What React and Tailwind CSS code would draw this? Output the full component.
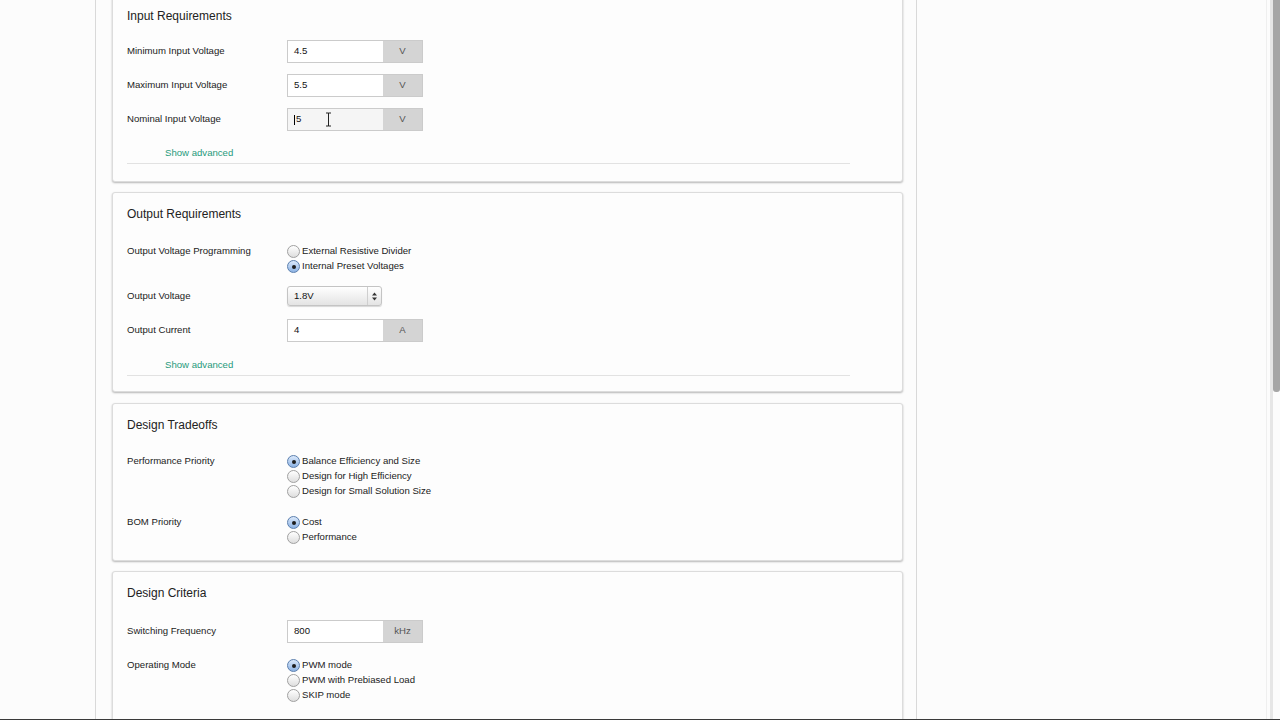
import React from "react";

const font = { fontFamily: '"Liberation Sans", Arial, sans-serif' };

function Radio({ checked, label }) {
  return (
    <div className="flex h-[15px] items-center">
      {checked ? (
        <span className="flex h-[13px] w-[13px] items-center justify-center rounded-full border border-[#5b7fae] bg-linear-to-b from-[#dbe9fb] to-[#8db3e4]">
          <span className="h-[4px] w-[4px] rounded-full bg-[#1d1d1d]" />
        </span>
      ) : (
        <span className="h-[13px] w-[13px] rounded-full border border-[#a0a0a0] bg-linear-to-b from-white to-[#dedede]" />
      )}
      <span className="ml-[2px] text-[9.6px] text-[#222]">{label}</span>
    </div>
  );
}

function Label({ children, h = "h-[22px]" }) {
  return <div className={`w-[160px] shrink-0 flex items-center text-[9.6px] text-[#222] ${h}`}>{children}</div>;
}

function UnitInput({ value, unit, focused }) {
  return (
    <div className="relative flex h-[23px] w-[136px] border border-[#cbcbcb]">
      <div className={`flex w-[95px] items-center pl-[6px] text-[9.6px] text-[#111] ${focused ? "bg-[#f5f5f5]" : "bg-white"}`}>
        {focused && <span className="mr-px h-[10px] w-px bg-black" />}
        {value}
      </div>
      <div className="flex flex-1 items-center justify-center bg-[#d4d4d4] text-[9.6px] text-[#555]">{unit}</div>
      {focused && (
        <svg className="absolute left-[37px] top-[3px]" width="7" height="15" viewBox="0 0 7 15">
          <path d="M1 1h2.5M3.5 1h2.5M3.5 1v13M1 14h2.5M3.5 14h2.5" stroke="#222" strokeWidth="1" fill="none" />
        </svg>
      )}
    </div>
  );
}

function InputRow({ label, value, unit, focused, className = "" }) {
  return (
    <div className={`flex items-center ${className}`}>
      <Label h="h-[23px]">{label}</Label>
      <UnitInput value={value} unit={unit} focused={focused} />
    </div>
  );
}

function RadioRow({ label, options, className = "" }) {
  return (
    <div className={`flex items-start ${className}`}>
      <Label h="h-[15px]">{label}</Label>
      <div className="flex flex-col">
        {options.map((o) => (
          <Radio key={o.label} checked={o.checked} label={o.label} />
        ))}
      </div>
    </div>
  );
}

function ShowAdvanced({ className = "", lineClass = "mt-[3px]" }) {
  return (
    <>
      <div className={`ml-[38px] h-[16px] leading-[16px] text-[9.6px] text-[#1f9a7b] ${className}`}>Show advanced</div>
      <div className={`h-px w-[723px] bg-[#e2e2e2] ${lineClass}`} />
    </>
  );
}

function Card({ title, children, className = "" }) {
  return (
    <div className={`rounded-[3px] border border-[#dcdcdc] bg-[#fdfdfd] pl-[14px] pt-[13px] shadow-[0_1px_2px_rgba(0,0,0,0.28)] ${className}`}>
      <div className="h-[16px] leading-[16px] text-[12px] text-[#222]">{title}</div>
      {children}
    </div>
  );
}

export default function App() {
  return (
    <div className="flex h-[720px] w-[1280px] flex-col overflow-hidden bg-[#fcfcfc]" style={font}>
      <div className="flex flex-1 overflow-hidden">
        <div className="w-[95px] shrink-0" />
        <div className="flex w-[822px] shrink-0 flex-col border-x border-[#d9d9d9] pl-[16px] pr-[13px]">
          {/* input requirements */}
          <Card title="Input Requirements" className="-mt-[6px] pb-[17px]">
            <InputRow className="mt-[16px]" label="Minimum Input Voltage" value="4.5" unit="V" />
            <InputRow className="mt-[11px]" label="Maximum Input Voltage" value="5.5" unit="V" />
            <InputRow className="mt-[11px]" label="Nominal Input Voltage" value="5" unit="V" focused />
            <ShowAdvanced className="mt-[14px]" lineClass="mt-[2px]" />
          </Card>

          {/* output requirements */}
          <Card title="Output Requirements" className="mt-[10px] pb-[15px]">
            <RadioRow
              className="mt-[22px]"
              label="Output Voltage Programming"
              options={[
                { label: "External Resistive Divider" },
                { label: "Internal Preset Voltages", checked: true },
              ]}
            />
            <div className="mt-[12px] flex items-center">
              <Label h="h-[20px]">Output Voltage</Label>
              <div className="flex h-[20px] w-[95px] items-center rounded-[3px] border border-[#c4c4c4] bg-linear-to-b from-white to-[#e4e4e4] shadow-[0_1px_1px_rgba(0,0,0,0.15)]">
                <span className="flex-1 pl-[6px] text-[9.6px] text-[#111]">1.8V</span>
                <span className="flex h-full w-[14px] items-center justify-center border-l border-[#cfcfcf]">
                  <svg width="5" height="9" viewBox="0 0 5 9">
                    <path d="M2.5 0.5L5 3.5H0Z M2.5 8.5L5 5.5H0Z" fill="#333" />
                  </svg>
                </span>
              </div>
            </div>
            <InputRow className="mt-[13px]" label="Output Current" value="4" unit="A" />
            <ShowAdvanced className="mt-[15px]" lineClass="mt-[2px]" />
          </Card>

          {/* design tradeoffs */}
          <Card title="Design Tradeoffs" className="mt-[11px] pb-[15px]">
            <RadioRow
              className="mt-[21px]"
              label="Performance Priority"
              options={[
                { label: "Balance Efficiency and Size", checked: true },
                { label: "Design for High Efficiency" },
                { label: "Design for Small Solution Size" },
              ]}
            />
            <RadioRow
              className="mt-[16px]"
              label="BOM Priority"
              options={[{ label: "Cost", checked: true }, { label: "Performance" }]}
            />
          </Card>

          {/* design criteria */}
          <Card title="Design Criteria" className="mt-[10px] pb-[20px]">
            <InputRow className="mt-[19px]" label="Switching Frequency" value="800" unit="kHz" />
            <RadioRow
              className="mt-[15px]"
              label="Operating Mode"
              options={[
                { label: "PWM mode", checked: true },
                { label: "PWM with Prebiased Load" },
                { label: "SKIP mode" },
              ]}
            />
          </Card>
        </div>
        <div className="flex-1" />
        {/* scrollbar */}
        <div className="flex w-[14px] shrink-0 border-l border-[#efefef]">
          <div className="w-[3px]" />
          <div className="w-[3px] bg-[#e6e6e6]" />
          <div className="flex-1">
            <div className="h-[392px] rounded-b-[3px] bg-[#a6a6a6]" />
          </div>
        </div>
      </div>
      <div className="h-px bg-[#3a3a3a]" />
    </div>
  );
}
